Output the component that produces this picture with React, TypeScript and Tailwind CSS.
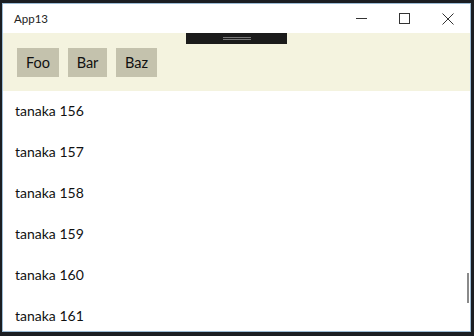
export default function App() {
  const rows = [156, 157, 158, 159, 160, 161];

  return (
    <div className="w-[474px] h-[336px] bg-[#1b1e22] pt-[3px] pl-[2px] overflow-hidden" style={{ fontFamily: 'Lato, "Noto Sans", sans-serif' }}>
      <div className="relative w-[469px] h-[329px] border border-[#9cbcd6] bg-white flex flex-col overflow-hidden">
        {/* title bar */}
        <div className="h-[29px] shrink-0 flex items-center justify-between bg-white">
          <span className="pl-[11px] text-[11.5px] text-[#222]">App13</span>
          <div className="flex items-center gap-[32px] pr-[16px]">
            <div className="w-[11px] h-px bg-[#333]" />
            <div className="w-[11px] h-[11px] border border-[#333]" />
            <svg width="12" height="12" viewBox="0 0 12 12">
              <path d="M0.5 0.5 L11.5 11.5 M11.5 0.5 L0.5 11.5" stroke="#333" strokeWidth="1" fill="none" />
            </svg>
          </div>
        </div>

        {/* command bar */}
        <div className="relative h-[58px] shrink-0 bg-[#f4f3df] flex items-center gap-[9px] pl-[14px] pt-[1px]">
          <button className="w-[42px] h-[29px] bg-[#c4c2ad] text-[14.5px] text-[#111]">Foo</button>
          <button className="w-[39px] h-[29px] bg-[#c4c2ad] text-[14.5px] text-[#111]">Bar</button>
          <button className="w-[41px] h-[29px] bg-[#c4c2ad] text-[14.5px] text-[#111]">Baz</button>
          <div className="absolute left-[183px] top-0 w-[101px] h-[11px] bg-[#1b1b1b] flex flex-col items-center justify-center gap-px">
            <div className="w-[28px] h-px bg-[#777]" />
            <div className="w-[28px] h-px bg-[#777]" />
          </div>
        </div>

        {/* list */}
        <div className="flex flex-col -mt-[1px]">
          {rows.map((n) => (
            <div key={n} className="h-[41px] shrink-0 flex items-center pl-[12px] text-[14px] text-[#111]">
              tanaka {n}
            </div>
          ))}
        </div>

        <div className="absolute left-[464px] top-[269px] w-[2px] h-[30px] bg-[#8a8a8a]" />
      </div>
    </div>
  );
}
